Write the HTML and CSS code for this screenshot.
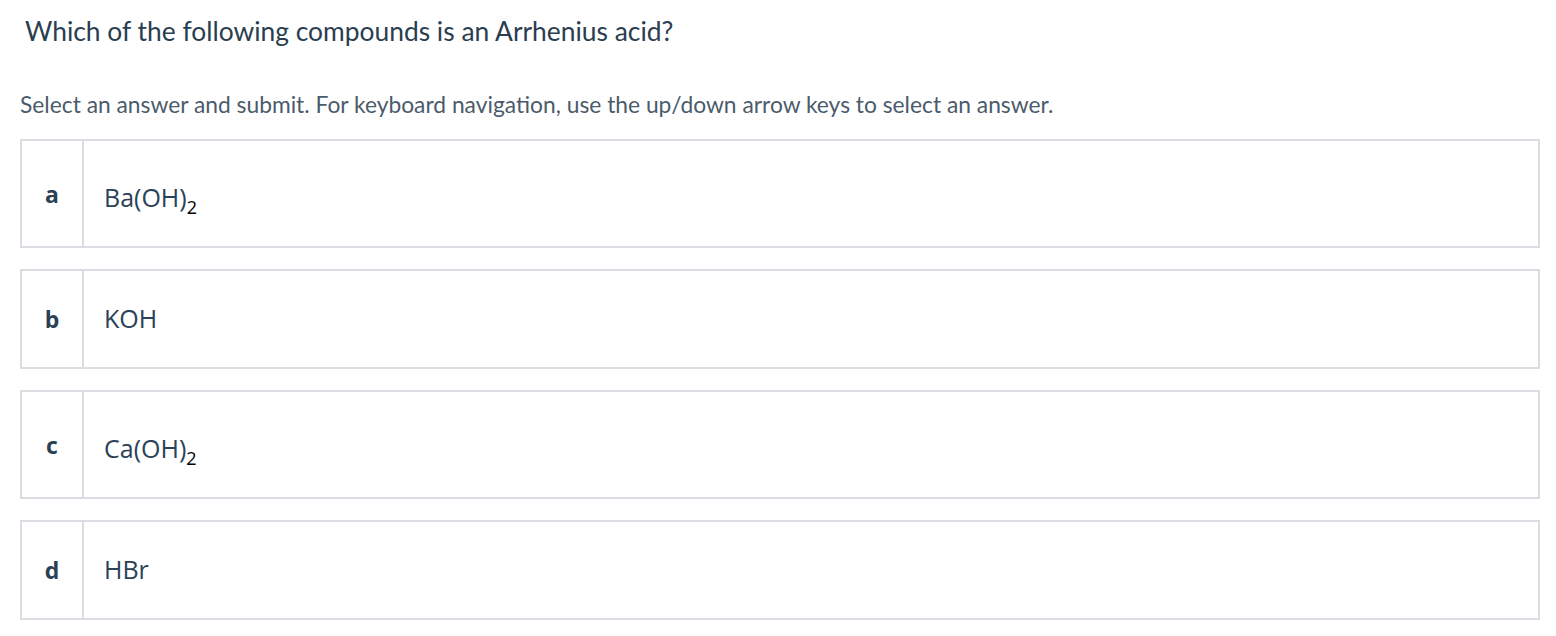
FILE: index.html
```html
<!DOCTYPE html>
<html>
<head>
<meta charset="utf-8">
<link rel="stylesheet" href="styles.css">
</head>
<body>
<div class="page">
  <h1 class="question">Which of the following compounds is an Arrhenius acid?</h1>
  <p class="instructions">Select an answer and submit. For keyboard navigation, use the up/down arrow keys to select an answer.</p>
  <div class="options">
    <div class="option">
      <div class="letter">a</div>
      <div class="answer">Ba(OH)<sub class="sub">2</sub></div>
    </div>
    <div class="option">
      <div class="letter">b</div>
      <div class="answer">KOH</div>
    </div>
    <div class="option">
      <div class="letter">c</div>
      <div class="answer">Ca(OH)<sub class="sub">2</sub></div>
    </div>
    <div class="option">
      <div class="letter">d</div>
      <div class="answer">HBr</div>
    </div>
  </div>
</div>
</body>
</html>
```
FILE: styles.css
```css
html, body {
  margin: 0;
  padding: 0;
  background: #ffffff;
}
.page {
  padding: 14px 16px 0 20px;
  font-family: Lato, "Noto Sans", sans-serif;
}
.question {
  margin: 0 0 0 5px;
  font-size: 26.4px;
  font-weight: 400;
  line-height: 34px;
  color: #2a3e50;
}
.instructions {
  margin: 41px 0 0 0;
  font-size: 22.8px;
  line-height: 30px;
  color: #4b5b6b;
}
.options {
  display: flex;
  flex-direction: column;
  gap: 21px;
  margin-top: 20px;
}
.option {
  display: flex;
  border: 2px solid #dadde1;
}
.letter {
  width: 60px;
  flex: none;
  border-right: 2px solid #dadde1;
  display: flex;
  align-items: center;
  justify-content: center;
  font-family: "Open Sans", sans-serif;
  font-weight: 700;
  font-size: 23px;
  color: #2b4053;
}
.answer {
  padding: 32px 0 34px 20px;
  font-family: "Open Sans", sans-serif;
  font-size: 25px;
  line-height: 30px;
  color: #2b4257;
}
.sub {
  display: inline-block;
  margin-top: 29px;
  font-family: "Open Sans", sans-serif;
  font-size: 18px;
  line-height: 10px;
  color: #000000;
  vertical-align: -7px;
}
```
